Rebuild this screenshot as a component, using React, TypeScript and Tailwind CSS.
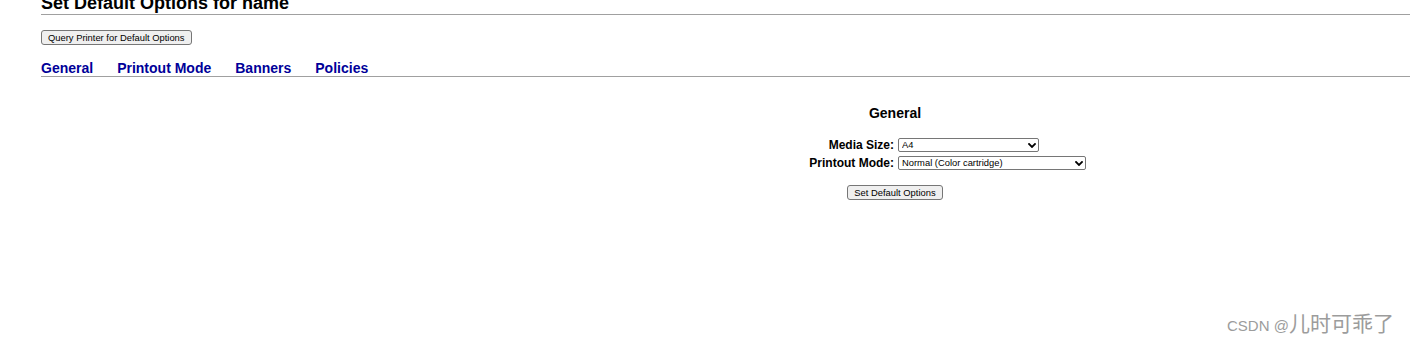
import React from "react";

/**
 * Page "Set Default Options" d'une imprimante (style CUPS).
 * La page réelle est plus large que la capture : le conteneur fait 1708px
 * et la fenêtre coupe à droite, d'où le centrage du formulaire vers x=895.
 */

const tabs = ["General", "Printout Mode", "Banners", "Policies"];

function Chevron() {
  return (
    <svg
      className="pointer-events-none absolute right-[3px] top-[5px]"
      width="8"
      height="5"
      viewBox="0 0 8 5"
      fill="none"
    >
      <path d="M1 1 L4 4 L7 1" stroke="#000" strokeWidth="1.8" strokeLinecap="square" />
    </svg>
  );
}

function SelectField({ width, value, options }: { width: string; value: string; options: string[] }) {
  return (
    <div className={`relative h-[14px] ${width}`}>
      <select
        defaultValue={value}
        className="block h-[14px] w-full appearance-none rounded-[2px] border border-[#767676] bg-white pl-[3px] text-[9.4px] leading-[12px] text-black outline-none"
      >
        {options.map((o) => (
          <option key={o} value={o}>
            {o}
          </option>
        ))}
      </select>
      <Chevron />
    </div>
  );
}

function SmallButton({ children }: { children: React.ReactNode }) {
  return (
    <button className="h-[15px] rounded-[3px] border border-[#767676] bg-[#efefef] px-[6px] text-[9.4px] leading-[12px] text-black">
      {children}
    </button>
  );
}

export default function App() {
  return (
    <div className="relative h-[344px] w-[1410px] overflow-hidden bg-white font-['Liberation_Sans',Arial,sans-serif] text-black">
      <div className="ml-[41px] w-[1708px]">
        {/* Titre */}
        <h2 className="mt-[-7px] border-b border-[#a0a0a0] text-[18px] font-bold leading-[21px]">
          Set Default Options for name
        </h2>

        <div className="mt-[15px] flex">
          <SmallButton>Query Printer for Default Options</SmallButton>
        </div>

        {/* Onglets */}
        <div className="mt-[15px] flex gap-[24px] border-b border-[#a0a0a0] text-[14px] font-bold leading-[16px] text-[#000099]">
          {tabs.map((t) => (
            <a key={t} href="#" className="text-[#000099]">
              {t}
            </a>
          ))}
        </div>

        {/* Formulaire */}
        <h3 className="mt-[28px] text-center text-[14px] font-bold leading-[16px]">General</h3>

        <div className="ml-[2px] mt-[17px] grid grid-cols-2 gap-x-[4px] gap-y-[4px]">
          <div className="flex h-[14px] items-end justify-end text-[12px] font-bold leading-[14px]">
            Media Size:
          </div>
          <SelectField width="w-[141px]" value="A4" options={["A4", "Letter", "Legal"]} />
          <div className="flex h-[14px] items-end justify-end text-[12px] font-bold leading-[14px]">
            Printout Mode:
          </div>
          <SelectField
            width="w-[188px]"
            value="Normal (Color cartridge)"
            options={["Normal (Color cartridge)", "Draft", "High Quality"]}
          />
        </div>

        <div className="mt-[15px] flex justify-center">
          <SmallButton>Set Default Options</SmallButton>
        </div>
      </div>

      {/* Filigrane */}
      <div className="absolute left-[1227px] top-[312px] whitespace-nowrap font-['Liberation_Sans','Noto_Sans_CJK_SC',sans-serif] leading-[24px] text-[#9c9c9c]">
        <span className="text-[15px]">CSDN @</span>
        <span className="text-[21px]">儿时可乖了</span>
      </div>
    </div>
  );
}
